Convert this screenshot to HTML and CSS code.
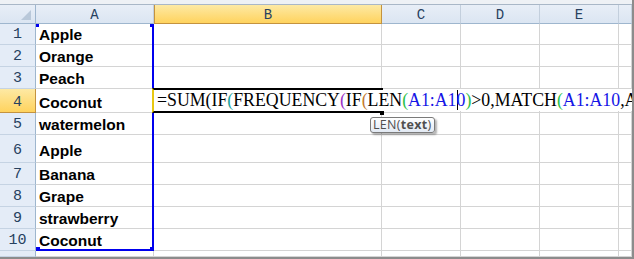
FILE: index.html
```html
<!DOCTYPE html>
<html>
<head>
<meta charset="utf-8">
<link rel="stylesheet" href="styles.css">
</head>
<body>
<div class="window">
  <div class="topstrip"></div>
  <div class="sheet">
    <div class="hd corner"><svg class="tri" width="36" height="19" viewBox="0 0 36 19"><polygon points="31,5 31,15 21,15" fill="#b9c8d9"/></svg></div>
    <div class="hd">A</div>
    <div class="hd active">B</div>
    <div class="hd">C</div>
    <div class="hd">D</div>
    <div class="hd">E</div>
    <div class="hd"></div>

    <div class="rn">1</div><div class="c a">Apple</div><div class="c"></div><div class="c"></div><div class="c"></div><div class="c"></div><div class="c"></div>
    <div class="rn">2</div><div class="c a">Orange</div><div class="c"></div><div class="c"></div><div class="c"></div><div class="c"></div><div class="c"></div>
    <div class="rn">3</div><div class="c a">Peach</div><div class="c"></div><div class="c"></div><div class="c"></div><div class="c"></div><div class="c"></div>
    <div class="rn active">4</div><div class="c a">Coconut</div><div class="c"></div><div class="c"></div><div class="c"></div><div class="c"></div><div class="c"></div>
    <div class="rn">5</div><div class="c a">watermelon</div><div class="c"></div><div class="c"></div><div class="c"></div><div class="c"></div><div class="c"></div>
    <div class="rn tall">6</div><div class="c a tall">Apple</div><div class="c"></div><div class="c"></div><div class="c"></div><div class="c"></div><div class="c"></div>
    <div class="rn">7</div><div class="c a">Banana</div><div class="c"></div><div class="c"></div><div class="c"></div><div class="c"></div><div class="c"></div>
    <div class="rn">8</div><div class="c a">Grape</div><div class="c"></div><div class="c"></div><div class="c"></div><div class="c"></div><div class="c"></div>
    <div class="rn">9</div><div class="c a">strawberry</div><div class="c"></div><div class="c"></div><div class="c"></div><div class="c"></div><div class="c"></div>
    <div class="rn">10</div><div class="c a">Coconut</div><div class="c"></div><div class="c"></div><div class="c"></div><div class="c"></div><div class="c"></div>
    <div class="rn"></div><div class="c"></div><div class="c"></div><div class="c"></div><div class="c"></div><div class="c"></div><div class="c"></div>
  </div>

  <div class="range">
    <span class="h h-tl"></span><span class="h h-tr"></span><span class="h h-bl"></span><span class="h h-br"></span>
  </div>

  <div class="editor">=SUM(IF<span class="p2">(</span>FREQUENCY<span class="p3">(</span>IF<span class="p4">(</span>LEN<span class="p5">(</span><span class="ref">A1:A1</span><span class="cursor"></span><span class="ref">0</span><span class="p5">)</span>&gt;0,MATCH<span class="p5">(</span><span class="ref">A1:A10</span>,A</div>
  <div class="editbox"></div>
  <div class="fill"></div>

  <div class="tip">LEN(<b>text</b>)</div>
</div>
</body>
</html>
```

FILE: styles.css
```css
* { box-sizing: border-box; }
html, body { margin: 0; padding: 0; background: #ffffff; }

.window {
  position: relative;
  width: 634px;
  height: 259px;
  border-right: 2px solid #8c8c8c;
  border-bottom: 2px solid #8c8c8c;
  background: #ffffff;
  overflow: hidden;
}

.topstrip {
  height: 5px;
  background: #eef1f5;
  border-bottom: 1px solid #a9b7c7;
}

.sheet {
  display: grid;
  grid-template-columns: 36px 118px 228px 79px 79px 79px 13px;
  grid-template-rows: 19px 21px 22px 22px 24px 22px 28px 22px 22px 22px 22px 6px;
}

.hd {
  background: linear-gradient(#e8eef7, #dbe5f2);
  border-right: 1px solid #c3cfdd;
  border-bottom: 1px solid #9eb6ce;
  font-family: "Liberation Mono", monospace;
  font-size: 14px;
  color: #27415f;
  display: flex;
  align-items: center;
  justify-content: center;
  line-height: 1;
  padding-top: 1px;
}
.hd.corner { border-right-color: #9eb6ce; position: relative; }
.tri { display: block; position: absolute; left: 0; top: 0; }
.hd.active {
  background: linear-gradient(#fde9a4, #ffd35e);
  border-right-color: #c4933f;
  border-bottom-color: #c4933f;
  border-left: 1px solid #c4933f;
}

.rn {
  background: #e4ecf7;
  border-right: 1px solid #9eb6ce;
  border-bottom: 1px solid #c5d3e3;
  font-family: "Liberation Mono", monospace;
  font-size: 15px;
  color: #27415f;
  display: flex;
  align-items: flex-end;
  justify-content: center;
  line-height: 1;
  padding-bottom: 2px;
}
.rn.tall { padding-bottom: 4px; }
.rn.active {
  background: linear-gradient(#fde9a4, #ffd35e);
  border-right-color: #c4933f;
  border-bottom-color: #c4933f;
}

.c {
  border-right: 1px solid #d4d4d4;
  border-bottom: 1px solid #d4d4d4;
}
.c.a {
  font-family: "Liberation Sans", Arial, sans-serif;
  font-weight: bold;
  font-size: 15.5px;
  color: #000;
  display: flex;
  align-items: flex-end;
  padding-left: 3px;
  padding-bottom: 2px;
  line-height: 1;
}
.c.a.tall { padding-bottom: 4px; }

.range {
  position: absolute;
  left: 36px;
  top: 24px;
  width: 118px;
  height: 227px;
  border-right: 2px solid #0000ee;
  border-bottom: 2px solid #0000ee;
}
.h { position: absolute; width: 4px; height: 4px; background: #0000ee; }
.h-tl { left: 0; top: 0; width: 3px; height: 3px; }
.h-tr { right: -2px; top: 0; height: 3px; }
.h-bl { left: 0; bottom: -2px; }
.h-br { right: -2px; bottom: -2px; }

.editor {
  position: absolute;
  left: 154px;
  top: 89px;
  right: 0;
  height: 22px;
  background: #ffffff;
  overflow: hidden;
  white-space: nowrap;
  font-family: "Liberation Serif", "Times New Roman", serif;
  font-size: 17.8px;
  line-height: 23px;
  padding-left: 3px;
  color: #000;
}
.p2 { color: #1aa39a; }
.p3 { color: #9b30c8; }
.p4 { color: #c47a2c; }
.p5 { color: #2bbf4a; }
.ref { color: #1515e6; }
.cursor {
  display: inline-block;
  width: 1px;
  height: 20px;
  background: #000;
  vertical-align: -4px;
  margin-right: -1px;
}

.editbox {
  position: absolute;
  left: 152px;
  top: 88px;
  width: 231px;
  height: 25px;
  border-top: 2px solid #000;
  border-bottom: 2px solid #000;
  border-left: 2px solid #e8c810;
}
.fill {
  position: absolute;
  left: 380px;
  top: 111px;
  width: 4px;
  height: 4px;
  background: #000;
}

.tip {
  position: absolute;
  left: 370px;
  top: 117px;
  width: 65px;
  height: 16px;
  border: 1px solid #7a7a7a;
  border-radius: 3px;
  background: linear-gradient(#ffffff, #e2e9f3);
  box-shadow: 2px 2px 2px rgba(0, 0, 0, 0.3);
  font-family: "Open Sans", "Noto Sans", sans-serif;
  font-size: 12.5px;
  letter-spacing: 0.3px;
  line-height: 14px;
  color: #4f4f4f;
  padding-left: 2px;
  white-space: nowrap;
}
.tip b { font-weight: bold; }
```
